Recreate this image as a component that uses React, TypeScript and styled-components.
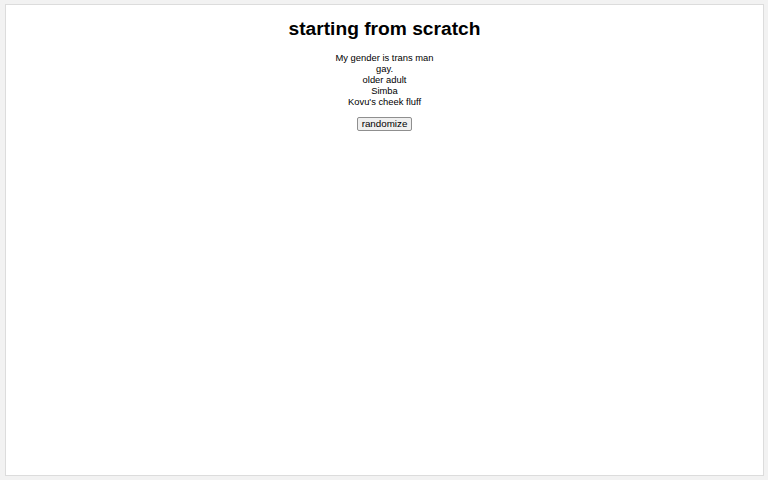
import React from "react";
import styled, { createGlobalStyle } from "styled-components";

const Global = createGlobalStyle`
  html, body { margin: 0; padding: 0; background: #f2f2f2; }
  body { font-family: "Liberation Sans", Arial, sans-serif; }
`;

const Page = styled.div`
  padding: 4px 4px 4px 5px;
  height: 480px;
  box-sizing: border-box;
`;

const Card = styled.main`
  background: #fff;
  border: 1px solid #dcdcdc;
  height: 100%;
  box-sizing: border-box;
  display: flex;
  flex-direction: column;
  align-items: center;
  padding-top: 14px;
`;

const Title = styled.h1`
  margin: 0;
  font-size: 19.2px;
  font-weight: bold;
  color: #000;
  line-height: 20px;
`;

const Lines = styled.div`
  margin-top: 13px;
  font-size: 9.4px;
  line-height: 11px;
  text-align: center;
  color: #000;
`;

const Button = styled.button`
  margin-top: 10px;
  font-family: "Liberation Sans", Arial, sans-serif;
  font-size: 9.8px;
  padding: 0 4px;
  height: 14px;
  line-height: 12px;
  background: #efefef;
  border: 1px solid #8f8f8f;
  border-radius: 2px;
  color: #000;
`;

const lines = ["My gender is trans man", "gay.", "older adult", "Simba", "Kovu's cheek fluff"];

export default function App() {
  return (
    <>
      <Global />
      <Page>
        <Card>
          <Title>starting from scratch</Title>
          <Lines>
            {lines.map((l) => (
              <div key={l}>{l}</div>
            ))}
          </Lines>
          <Button>randomize</Button>
        </Card>
      </Page>
    </>
  );
}
